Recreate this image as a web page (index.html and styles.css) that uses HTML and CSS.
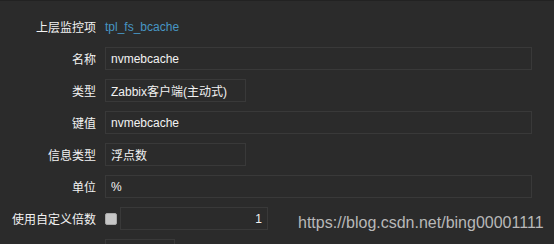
FILE: index.html
```html
<!DOCTYPE html>
<html lang="zh-CN">

<head>
    <meta charset="UTF-8">
    <meta name="viewport" content="width=device-width, initial-scale=1.0">
    <title>监控项</title>
    <link rel="stylesheet" href="styles.css">
</head>

<body>

    <div class="page">
        <div class="form">
            <div class="label">上层监控项</div>
            <div class="field"><a class="link" href="#">tpl_fs_bcache</a></div>

            <div class="label">名称</div>
            <div class="field"><input class="text wide" type="text" value="nvmebcache"></div>

            <div class="label">类型</div>
            <div class="field"><div class="text short">Zabbix客户端(主动式)</div></div>

            <div class="label">键值</div>
            <div class="field"><input class="text wide" type="text" value="nvmebcache"></div>

            <div class="label">信息类型</div>
            <div class="field"><div class="text short">浮点数</div></div>

            <div class="label">单位</div>
            <div class="field"><input class="text wide" type="text" value="%"></div>

            <div class="label">使用自定义倍数</div>
            <div class="field multiplier">
                <span class="checkbox"></span>
                <input class="text number" type="text" value="1">
            </div>

            <div class="label"></div>
            <div class="field"><div class="text tiny"></div></div>
        </div>

        <div class="watermark">https://blog.csdn.net/bing00001111</div>
    </div>

</body>

</html>
```

FILE: styles.css
```css
html,
body {
    margin: 0;
    padding: 0;
    background: #2b2b2b;
    overflow: hidden;
}

.page {
    position: relative;
    box-sizing: border-box;
    height: 244px;
    overflow: hidden;
    border-top: 1px solid #222222;
    font-family: "Liberation Sans", Arial, "Noto Sans CJK SC", sans-serif;
    font-size: 12px;
    color: #f2f2f2;
}

.form {
    display: grid;
    grid-template-columns: 96px 1fr;
    grid-auto-rows: 23px;
    column-gap: 9px;
    row-gap: 9px;
    padding-top: 14px;
}

.label {
    display: flex;
    align-items: center;
    justify-content: flex-end;
    white-space: nowrap;
}

.field {
    display: flex;
    align-items: center;
}

.link {
    color: #4796c4;
    text-decoration: none;
}

.text {
    box-sizing: border-box;
    height: 23px;
    padding: 0 5px;
    border: 1px solid #393939;
    background: #2b2b2b;
    color: #f2f2f2;
    font-family: inherit;
    font-size: 12px;
    display: flex;
    align-items: center;
    outline: none;
    margin: 0;
}

.wide {
    width: 427px;
}

.short {
    width: 141px;
}

.tiny {
    width: 70px;
}

.multiplier {
    gap: 3px;
}

.checkbox {
    box-sizing: border-box;
    width: 12px;
    height: 12px;
    border: 1px solid #a8a8a8;
    border-radius: 2px;
    background: #c6c6c6;
}

.number {
    width: 148px;
    text-align: right;
}

.watermark {
    position: absolute;
    left: 298px;
    top: 213px;
    font-size: 16px;
    color: #b8b8b8;
}
```
